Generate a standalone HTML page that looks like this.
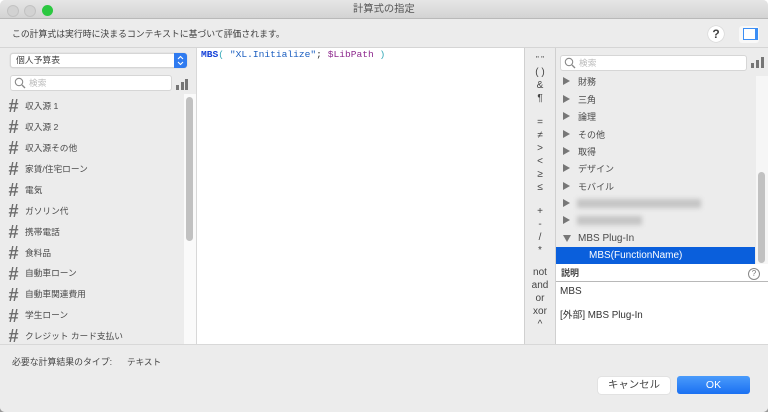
<!DOCTYPE html>
<html><head><meta charset="utf-8"><style>
html,body{margin:0;padding:0;background:linear-gradient(#fff 50%,#999 50%);width:768px;height:412px;overflow:hidden}
#w{position:relative;width:768px;height:412px;overflow:hidden;border-radius:5px;background:#ececec;font-family:"Liberation Sans","Noto Sans CJK JP",sans-serif;color:#3a3a3a;font-size:8.7px}
#w div,#w span{position:absolute;white-space:nowrap}
.l{left:25px;line-height:14px;color:#4a4a4a;font-size:8.7px}
.h{left:8px;width:11px;text-align:center;font-size:18px;line-height:20px;color:#6e6e6e;font-family:"Liberation Sans",sans-serif;font-weight:700}
.r{left:578px;line-height:14px;color:#4a4a4a;font-size:9px}
.t{left:563px;width:0;height:0;border-left:7px solid #777;border-top:4px solid transparent;border-bottom:4px solid transparent}
.o{left:525px;width:30px;text-align:center;color:#444;font-size:10px;line-height:12px}
.s{background:#fff;border:1px solid #d6d6d6;border-radius:3px;box-sizing:border-box}
.b{width:3px;background:#767676;bottom:auto}
</style></head><body><div id="w">
<div style="left:0;top:0;width:768px;height:19px;box-sizing:border-box;background:linear-gradient(#e6e6e6,#d3d3d3);border-bottom:1px solid #b9b9b9"></div>
<div style="left:7px;top:5px;width:10px;height:10px;border-radius:50%;background:#d2d2d2;border:1px solid #c2c2c2"></div>
<div style="left:24px;top:5px;width:10px;height:10px;border-radius:50%;background:#d2d2d2;border:1px solid #c2c2c2"></div>
<div style="left:42px;top:5px;width:11px;height:11px;border-radius:50%;background:#2bc840"></div>
<div style="left:353px;top:3px;font-size:10.3px;line-height:14px;color:#555">計算式の指定</div>
<div style="left:12px;top:27px;line-height:14px;font-size:8.85px;color:#3c3c3c">この計算式は実行時に決まるコンテキストに基づいて評価されます。</div>
<div style="left:708px;top:26px;width:16px;height:16px;border-radius:50%;background:#fff;box-shadow:0 0 1px #999;text-align:center;font-size:12px;font-weight:bold;line-height:16px;color:#444">?</div>
<div style="left:739px;top:26px;width:20px;height:17px;background:#f8f8f8;border-radius:3px"></div>
<div style="top:28px;width:15px;height:12px;box-sizing:border-box;border:1.5px solid #3b8ef5;border-right-width:3px;background:#fff;left:743px"></div>
<div style="left:0;top:47px;width:768px;height:1px;background:#d5d5d5"></div>

<div style="left:196px;top:48px;width:329px;height:297px;background:#fff;border-left:1px solid #d8d8d8;border-right:1px solid #d0d0d0;box-sizing:border-box"></div>
<div style="left:201px;top:48px;font-family:'Liberation Mono',monospace;font-size:9.6px;line-height:14px;color:#1a4fd0"><b style="color:#1440d8">MBS</b><span style="position:static;color:#35a9b8">(</span> <span style="position:static;color:#1c5fc0">"XL.Initialize"</span><span style="position:static;color:#333">;</span> <span style="position:static;color:#8e2a8e">$LibPath</span> <span style="position:static;color:#35a9b8">)</span></div>

<div class="s" style="left:10px;top:53px;width:177px;height:15px;box-shadow:0 0 1px #bbb"></div>
<div style="left:16px;top:53px;line-height:15px;color:#444;font-size:8.8px">個人予算表</div>
<div style="left:174px;top:53px;width:13px;height:15px;background:#2f7bf0;border-radius:0 3px 3px 0;color:#fff"></div>
<svg style="position:absolute;left:174px;top:53px" width="13" height="15"><path d="M4 6l2.5-2.5L9 6M4 9l2.5 2.5L9 9" fill="none" stroke="#fff" stroke-width="1.1"/></svg>
<div class="s" style="left:10px;top:75px;width:162px;height:16px"></div>
<svg style="position:absolute;left:14px;top:77px" width="12" height="12"><circle cx="5" cy="5" r="3.7" fill="none" stroke="#888" stroke-width="1.1"/><path d="M8 8l3 3" stroke="#888" stroke-width="1.3"/></svg>
<div style="left:29px;top:76px;line-height:14px;color:#bbb;font-size:8.7px">検索</div>
<div class="b" style="left:176px;top:85px;height:5px"></div><div class="b" style="left:181px;top:82px;height:8px"></div><div class="b" style="left:185px;top:79px;height:11px"></div>

<div style="left:184px;top:94px;width:12px;height:251px;background:#fafafa"></div>
<div style="left:186px;top:97px;width:7px;height:144px;border-radius:4px;background:#c1c1c1"></div>

<div class="h" style="top:96px">#</div><div class="l" style="top:99px">収入源 1</div>
<div class="h" style="top:117px">#</div><div class="l" style="top:120px">収入源 2</div>
<div class="h" style="top:138px">#</div><div class="l" style="top:141px">収入源その他</div>
<div class="h" style="top:159px">#</div><div class="l" style="top:162px">家賃/住宅ローン</div>
<div class="h" style="top:180px">#</div><div class="l" style="top:183px">電気</div>
<div class="h" style="top:201px">#</div><div class="l" style="top:204px">ガソリン代</div>
<div class="h" style="top:222px">#</div><div class="l" style="top:225px">携帯電話</div>
<div class="h" style="top:243px">#</div><div class="l" style="top:246px">食料品</div>
<div class="h" style="top:264px">#</div><div class="l" style="top:266px">自動車ローン</div>
<div class="h" style="top:285px">#</div><div class="l" style="top:287px">自動車関連費用</div>
<div class="h" style="top:306px">#</div><div class="l" style="top:308px">学生ローン</div>
<div class="h" style="top:326px">#</div><div class="l" style="top:329px">クレジット カード支払い</div>

<div class="o" style="top:54px;font-size:8px">" "</div>
<div class="o" style="top:67px">( )</div>
<div class="o" style="top:80px">&amp;</div>
<div class="o" style="top:93px">¶</div>
<div class="o" style="top:117px">=</div>
<div class="o" style="top:130px">≠</div>
<div class="o" style="top:143px">&gt;</div>
<div class="o" style="top:156px">&lt;</div>
<div class="o" style="top:169px">≥</div>
<div class="o" style="top:182px">≤</div>
<div class="o" style="top:206px">+</div>
<div class="o" style="top:219px">-</div>
<div class="o" style="top:232px">/</div>
<div class="o" style="top:245px">*</div>
<div class="o" style="top:267px">not</div>
<div class="o" style="top:280px">and</div>
<div class="o" style="top:293px">or</div>
<div class="o" style="top:306px">xor</div>
<div class="o" style="top:319px">^</div>
<div style="left:555px;top:48px;width:1px;height:297px;background:#d0d0d0"></div>

<div class="s" style="left:560px;top:55px;width:187px;height:16px"></div>
<svg style="position:absolute;left:564px;top:57px" width="12" height="12"><circle cx="5" cy="5" r="3.7" fill="none" stroke="#888" stroke-width="1.1"/><path d="M8 8l3 3" stroke="#888" stroke-width="1.3"/></svg>
<div style="left:579px;top:56px;line-height:14px;color:#bbb;font-size:8.7px">検索</div>
<div class="b" style="left:751px;top:63px;height:5px"></div><div class="b" style="left:756px;top:60px;height:8px"></div><div class="b" style="left:761px;top:57px;height:11px"></div>

<div style="left:756px;top:76px;width:12px;height:190px;background:#f6f6f6"></div>
<div style="left:758px;top:172px;width:7px;height:91px;border-radius:4px;background:#c1c1c1"></div>

<div class="t" style="top:77px"></div><div class="r" style="top:75px">財務</div>
<div class="t" style="top:95px"></div><div class="r" style="top:93px">三角</div>
<div class="t" style="top:112px"></div><div class="r" style="top:110px">論理</div>
<div class="t" style="top:130px"></div><div class="r" style="top:128px">その他</div>
<div class="t" style="top:147px"></div><div class="r" style="top:145px">取得</div>
<div class="t" style="top:164px"></div><div class="r" style="top:162px">デザイン</div>
<div class="t" style="top:182px"></div><div class="r" style="top:180px">モバイル</div>
<div class="t" style="top:199px"></div><div style="left:577px;top:199px;width:124px;height:9px;background:#c4c4c4;filter:blur(2.5px)"></div>
<div class="t" style="top:216px"></div><div style="left:577px;top:216px;width:65px;height:9px;background:#c4c4c4;filter:blur(2.5px)"></div>
<div style="left:563px;top:235px;width:0;height:0;border-top:7px solid #777;border-left:4px solid transparent;border-right:4px solid transparent"></div>
<div class="r" style="top:232px;font-size:10px">MBS Plug-In</div>
<div style="left:556px;top:247px;width:199px;height:17px;background:#0a5fdc"></div>
<div style="left:589px;top:249px;line-height:14px;color:#fff;font-size:10px">MBS(FunctionName)</div>

<div style="left:556px;top:264px;width:212px;height:81px;background:#fff"></div>
<div style="left:556px;top:281px;width:212px;height:1px;background:#b8b8b8"></div>
<div style="left:561px;top:266px;line-height:14px;font-size:9px;font-weight:bold;color:#444">説明</div>
<div style="left:748px;top:268px;width:10px;height:10px;border:1px solid #888;border-radius:50%;text-align:center;font-size:8px;line-height:10px;color:#777">?</div>
<div style="left:560px;top:285px;line-height:14px;font-size:10px;color:#333">MBS</div>
<div style="left:560px;top:309px;line-height:14px;font-size:9.8px;color:#333">[外部] MBS Plug-In</div>

<div style="left:0;top:344px;width:768px;height:68px;background:#ececec;border-top:1px solid #d8d8d8;box-sizing:border-box"></div>
<div style="left:12px;top:355px;line-height:14px;font-size:8.9px;color:#444">必要な計算結果のタイプ:</div>
<div style="left:127px;top:355px;line-height:14px;font-size:8.6px;color:#444">テキスト</div>
<div style="left:598px;top:377px;width:72px;height:17px;background:#fff;border-radius:3px;box-shadow:0 0 1px #aaa;text-align:center;line-height:17px;font-size:10.4px;color:#444">キャンセル</div>
<div style="left:677px;top:376px;width:73px;height:18px;background:linear-gradient(#4a9bfb,#1a70f2);border-radius:3px;text-align:center;line-height:18px;font-size:10.5px;color:#fff">OK</div>
</div></body></html>
